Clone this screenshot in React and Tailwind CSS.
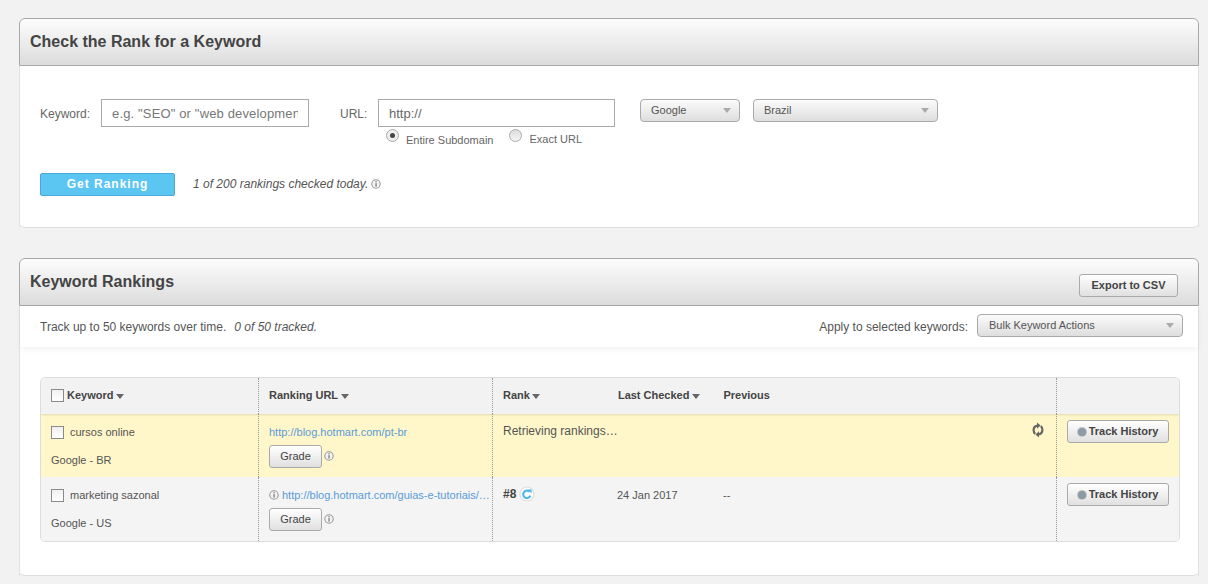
const FONT = { fontFamily: '"Liberation Sans", Arial, sans-serif' };

function InfoIcon({ className = "" }) {
  return (
    <svg width="10" height="10" viewBox="0 0 10 10" className={className}>
      <circle cx="5" cy="5" r="4.2" fill="#f4f4f4" stroke="#999" strokeWidth="1.1" />
      <rect x="4.4" y="4.2" width="1.3" height="3.4" fill="#777" />
      <rect x="4.4" y="2.2" width="1.3" height="1.2" fill="#777" />
    </svg>
  );
}

function Caret({ color = "border-t-[#666]" }) {
  return <span className={"inline-block w-0 h-0 border-x-[4px] border-x-transparent border-t-[5px] " + color} />;
}

function Select({ label, className, labelClass = "" }) {
  return (
    <div
      className={
        "flex h-[23px] items-center justify-between rounded-[4px] border border-[#aaa] bg-gradient-to-b from-[#fbfbfb] to-[#dedede] pl-[10px] pr-[8px] text-[11px] text-[#555] " +
        className
      }
    >
      <span className={"-mt-[1px] " + labelClass}>{label}</span>
      <Caret color="border-t-[#aaa]" />
    </div>
  );
}

function PanelHeader({ title, children }) {
  return (
    <div className="flex h-[48px] items-center justify-between rounded-t-[6px] border border-[#a8a8a8] bg-gradient-to-b from-[#fdfdfd] to-[#dcdcdc] pl-[10px] pr-[20px]">
      <h2 className="text-[16px] font-bold text-[#444]">{title}</h2>
      {children}
    </div>
  );
}

function SmallButton({ children, className = "" }) {
  return (
    <button
      className={
        "flex h-[23px] items-center justify-center rounded-[3px] border border-[#aaa] bg-gradient-to-b from-white to-[#e0e0e0] text-[11px] font-bold text-[#444] " +
        className
      }
    >
      {children}
    </button>
  );
}

function Checkbox({ className = "" }) {
  return <span className={"block h-[13px] w-[13px] border border-[#8a8a8a] bg-gradient-to-b from-[#f0f0f0] to-white " + className} />;
}

function GradeButton() {
  return (
    <div className="mt-[4px] flex items-center gap-[2px]">
      <SmallButton className="w-[53px] font-normal">Grade</SmallButton>
      <InfoIcon />
    </div>
  );
}

function TrackButton() {
  return (
    <SmallButton className="w-[102px] gap-[3px]">
      <span className="h-[8px] w-[8px] rounded-full bg-[#8b9ba3] ring-1 ring-[#c4c4c4]" />
      Track History
    </SmallButton>
  );
}

function SpinIcon() {
  const half = (
    <>
      <path d="M7 3.6C4.4 3.8 2.6 5.6 2.6 8c0 1.6.6 3 1.6 3.8" fill="none" stroke="#666" strokeWidth="2.2" />
      <path d="M6 .4 9.6 3.6 6 6.8z" fill="#666" />
    </>
  );
  return (
    <svg width="14" height="16" viewBox="0 0 14 16" className="absolute right-[11px] top-[8px]">
      {half}
      <g transform="rotate(180 7 8)">{half}</g>
    </svg>
  );
}

function RecheckIcon() {
  return (
    <svg width="16" height="16" viewBox="0 0 16 16">
      <circle cx="8" cy="8" r="7" fill="#fff" stroke="#ddd" strokeWidth="1.2" />
      <path d="M10.6 5.8A3.7 3.7 0 1 0 11.4 9.6" fill="none" stroke="#4fb8ea" strokeWidth="2.2" />
      <path d="M9 3.6h3.6v3.8z" fill="#4fb8ea" />
    </svg>
  );
}

function KeywordRow({ name, engine, yellow, urlCell, rankCell, checked, previous, refresh }) {
  const divider = "border-l border-dotted border-l-[#999]";
  return (
    <div className={"flex text-[11px] text-[#555] " + (yellow ? "h-[63px] bg-[#fff7c9]" : "h-[64px] bg-[#f4f4f4]")}>
      <div className="w-[217px] pl-[10px] pt-[10px]">
        <div className="flex items-center gap-[6px]">
          <Checkbox />
          <span>{name}</span>
        </div>
        <div className="mt-[11px]">{engine}</div>
      </div>
      <div className={"w-[234px] pl-[10px] pt-[10px] " + divider}>{urlCell}</div>
      <div className={"relative w-[564px] pl-[10px] pt-[8px] " + divider}>
        {rankCell}
        {checked && <span className="absolute left-[124px] top-[10px]">{checked}</span>}
        {previous && <span className="absolute left-[230px] top-[10px]">{previous}</span>}
        {refresh && <SpinIcon />}
      </div>
      <div className={"flex-1 pl-[10px] pt-[6px] " + divider}>
        <TrackButton />
      </div>
    </div>
  );
}

export default function App() {
  const headCell = "border-l border-dotted border-l-[#999]";
  return (
    <div style={FONT} className="h-[584px] overflow-hidden bg-[#f2f2f2] pl-[19px] pr-[9px] pt-[18px]">
      {/* Rank check form */}
      <section className="h-[210px] rounded-[6px] border-b border-[#ddd] bg-white">
        <PanelHeader title="Check the Rank for a Keyword" />
        <div className="h-[161px] border-x border-x-[#e2e2e2] pl-[20px] pt-[33px]">
          <div className="flex items-start text-[12px] text-[#666]">
            <label className="mt-[6px] w-[61px]">Keyword:</label>
            <input
              readOnly
              placeholder={'e.g. "SEO" or "web development"'}
              className="h-[28px] w-[208px] border border-[#aaa] bg-white px-[10px] text-[13px] tracking-[0.15px] placeholder:text-[#777] outline-none"
            />
            <label className="ml-[31px] mt-[6px] w-[38px]">URL:</label>
            <div className="w-[237px]">
              <input
                readOnly
                value="http://"
                className="h-[28px] w-full border border-[#aaa] bg-white px-[10px] text-[13px] text-[#666] outline-none"
              />
              <div className="mt-[2px] flex items-start pl-[8px] text-[11px]">
                <span className="flex h-[13px] w-[13px] items-center justify-center rounded-full border border-[#aaa] bg-[#eee]">
                  <span className="h-[5px] w-[5px] rounded-full bg-[#444]" />
                </span>
                <span className="ml-[7px] mt-[3px]">Entire Subdomain</span>
                <span className="ml-[16px] h-[13px] w-[13px] rounded-full border border-[#aaa] bg-gradient-to-b from-[#ddd] to-[#f4f4f4]" />
                <span className="ml-[7px] mt-[2px]">Exact URL</span>
              </div>
            </div>
            <Select label="Google" className="ml-[25px] w-[100px]" />
            <Select label="Brazil" className="ml-[13px] w-[185px]" />
          </div>
          <div className="mt-[24px] flex items-center">
            <button className="h-[23px] w-[135px] rounded-[2px] border border-[#4aa9d6] bg-[#5bc6f2] text-[12px] font-bold tracking-[1px] text-white">
              Get Ranking
            </button>
            <span className="ml-[18px] text-[12px] italic text-[#555]">1 of 200 rankings checked today.</span>
            <InfoIcon className="ml-[3px]" />
          </div>
        </div>
      </section>

      {/* Tracked keywords */}
      <section className="mt-[30px] h-[318px] rounded-[6px] border-b border-[#ddd] bg-white">
        <PanelHeader title="Keyword Rankings">
          <SmallButton className="mt-[6px] w-[99px]">Export to CSV</SmallButton>
        </PanelHeader>
        <div className="h-[270px] border-x border-x-[#e2e2e2]">
          <div className="flex h-[41px] items-center justify-between pl-[20px] pr-[15px] text-[12px] text-[#555] shadow-[0_2px_6px_rgba(0,0,0,0.06)]">
            <div>
              Track up to 50 keywords over time.
              <span className="ml-[8px] italic">0 of 50 tracked.</span>
            </div>
            <div className="flex items-center gap-[9px]">
              <span>Apply to selected keywords:</span>
              <Select label="Bulk Keyword Actions" className="-mt-[2px] w-[206px]" labelClass="ml-[1px]" />
            </div>
          </div>

          <div className="ml-[20px] mr-[18px] mt-[30px] overflow-hidden rounded-[5px] border border-[#ddd]">
            <div className="relative flex h-[36px] bg-[#f2f2f2] text-[11px] font-bold text-[#444] shadow-[0_1px_2px_rgba(0,0,0,0.12)]">
              <div className="flex w-[217px] items-center pb-[2px] pl-[10px]">
                <Checkbox />
                <span className="ml-[3px]">Keyword</span>
                <span className="ml-[3px]"><Caret /></span>
              </div>
              <div className={"flex w-[234px] items-center pb-[2px] pl-[10px] " + headCell}>
                Ranking URL
                <span className="ml-[3px]"><Caret /></span>
              </div>
              <div className={"flex w-[564px] items-center pb-[2px] pl-[10px] " + headCell}>
                <span>Rank</span>
                <span className="ml-[2px]"><Caret /></span>
                <span className="ml-[78px]">Last Checked</span>
                <span className="ml-[3px]"><Caret /></span>
                <span className="ml-[23px]">Previous</span>
              </div>
              <div className={"flex-1 " + headCell} />
            </div>
            <KeywordRow
              yellow
              refresh
              name="cursos online"
              engine="Google - BR"
              urlCell={
                <>
                  <a className="block text-[#5a9bd8]">http://blog.hotmart.com/pt-br</a>
                  <GradeButton />
                </>
              }
              rankCell={<span className="text-[12px]">Retrieving rankings…</span>}
            />
            <KeywordRow
              name="marketing sazonal"
              engine="Google - US"
              checked="24 Jan 2017"
              previous="--"
              urlCell={
                <>
                  <div className="flex items-center gap-[3px]">
                    <InfoIcon />
                    <a className="whitespace-nowrap text-[#5a9bd8]">http://blog.hotmart.com/guias-e-tutoriais/…</a>
                  </div>
                  <GradeButton />
                </>
              }
              rankCell={
                <div className="flex items-center gap-[3px]">
                  <span className="text-[12px] font-bold text-[#444]">#8</span>
                  <RecheckIcon />
                </div>
              }
            />
          </div>
        </div>
      </section>
    </div>
  );
}
